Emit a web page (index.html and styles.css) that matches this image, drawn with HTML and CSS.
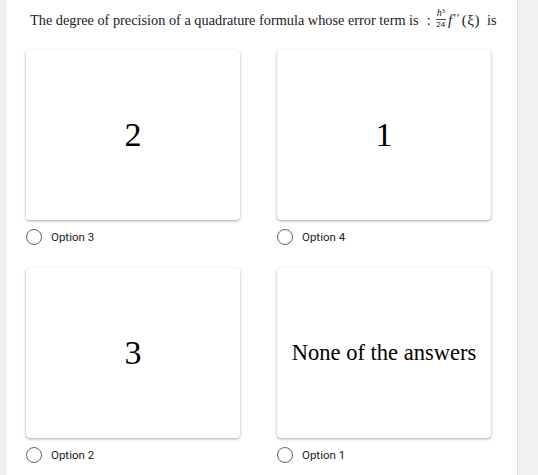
FILE: index.html
```html
<!DOCTYPE html>
<html>
<head>
<meta charset="utf-8">
<link rel="stylesheet" href="styles.css">
</head>
<body>
<div class="page">
  <div class="question">
    <span>The degree of precision of a quadrature formula whose error term is</span>
    <span class="colon">:</span>
    <span class="frac"><span class="num">h<sup>3</sup></span><span class="den">24</span></span><span class="fx"><i>f</i><span class="pr">′′</span>(ξ)</span>
    <span class="tail">is</span>
  </div>
  <div class="grid">
    <div class="option">
      <div class="card"><span class="big">2</span></div>
      <label class="choice"><span class="radio"></span><span class="label">Option 3</span></label>
    </div>
    <div class="option">
      <div class="card"><span class="big">1</span></div>
      <label class="choice"><span class="radio"></span><span class="label">Option 4</span></label>
    </div>
    <div class="option">
      <div class="card"><span class="big">3</span></div>
      <label class="choice"><span class="radio"></span><span class="label">Option 2</span></label>
    </div>
    <div class="option">
      <div class="card"><span class="mid">None of the answers</span></div>
      <label class="choice"><span class="radio"></span><span class="label">Option 1</span></label>
    </div>
  </div>
</div>
</body>
</html>
```

FILE: styles.css
```css
html, body {
  margin: 0;
  padding: 0;
  background: #f1f1f1;
}
.page {
  margin-left: 7px;
  min-height: 475px;
  box-sizing: border-box;
  width: 511px;
  background: #fff;
  border-right: 1px solid #dadce0;
  padding: 9px 26px 0 19px;
}
.question {
  font-family: "Liberation Serif", "Times New Roman", serif;
  font-size: 14.3px;
  color: #202124;
  margin-left: 4px;
  height: 22px;
  white-space: nowrap;
  display: flex;
  align-items: center;
}
.colon {
  margin-left: 8px;
  margin-right: 5px;
}
.frac {
  display: inline-flex;
  flex-direction: column;
  align-items: center;
  line-height: 1;
  font-size: 10px;
  margin-top: -3px;
}
.frac .num {
  font-style: italic;
  padding: 0 1px 1px;
  border-bottom: 1px solid #555;
}
.frac .num sup {
  font-size: 6.5px;
  vertical-align: 3px;
  font-style: normal;
}
.frac .den {
  font-family: "Liberation Sans", Arial, sans-serif;
  font-size: 8px;
  padding-top: 1px;
}
.fx {
  font-size: 15px;
  margin-left: 2px;
  letter-spacing: 0.5px;
}
.fx i {
  margin-right: 1px;
}
.fx .pr {
  font-size: 12px;
  vertical-align: 3px;
  margin-right: 2px;
}
.tail {
  margin-left: 7px;
}
.grid {
  display: grid;
  grid-template-columns: 214px 214px;
  column-gap: 37px;
  row-gap: 23px;
  margin-top: 19px;
}
.option {
  display: flex;
  flex-direction: column;
}
.card {
  height: 170px;
  background: #fff;
  border-radius: 4px;
  box-shadow: 0 1px 2px 0 rgba(60, 64, 67, 0.3), 0 1px 3px 1px rgba(60, 64, 67, 0.12);
  display: flex;
  align-items: center;
  justify-content: center;
  font-family: "Liberation Serif", "Times New Roman", serif;
  color: #000;
}
.big {
  font-size: 34px;
  line-height: 1;
}
.mid {
  font-size: 22.5px;
}
.choice {
  display: flex;
  align-items: center;
  margin-top: 9px;
  height: 16px;
}
.radio {
  width: 16px;
  height: 16px;
  box-sizing: border-box;
  border: 1.5px solid #5f6368;
  border-radius: 50%;
}
.label {
  margin-left: 9px;
  font-family: Roboto, "Noto Sans", sans-serif;
  font-size: 11.5px;
  color: #202124;
}
```
